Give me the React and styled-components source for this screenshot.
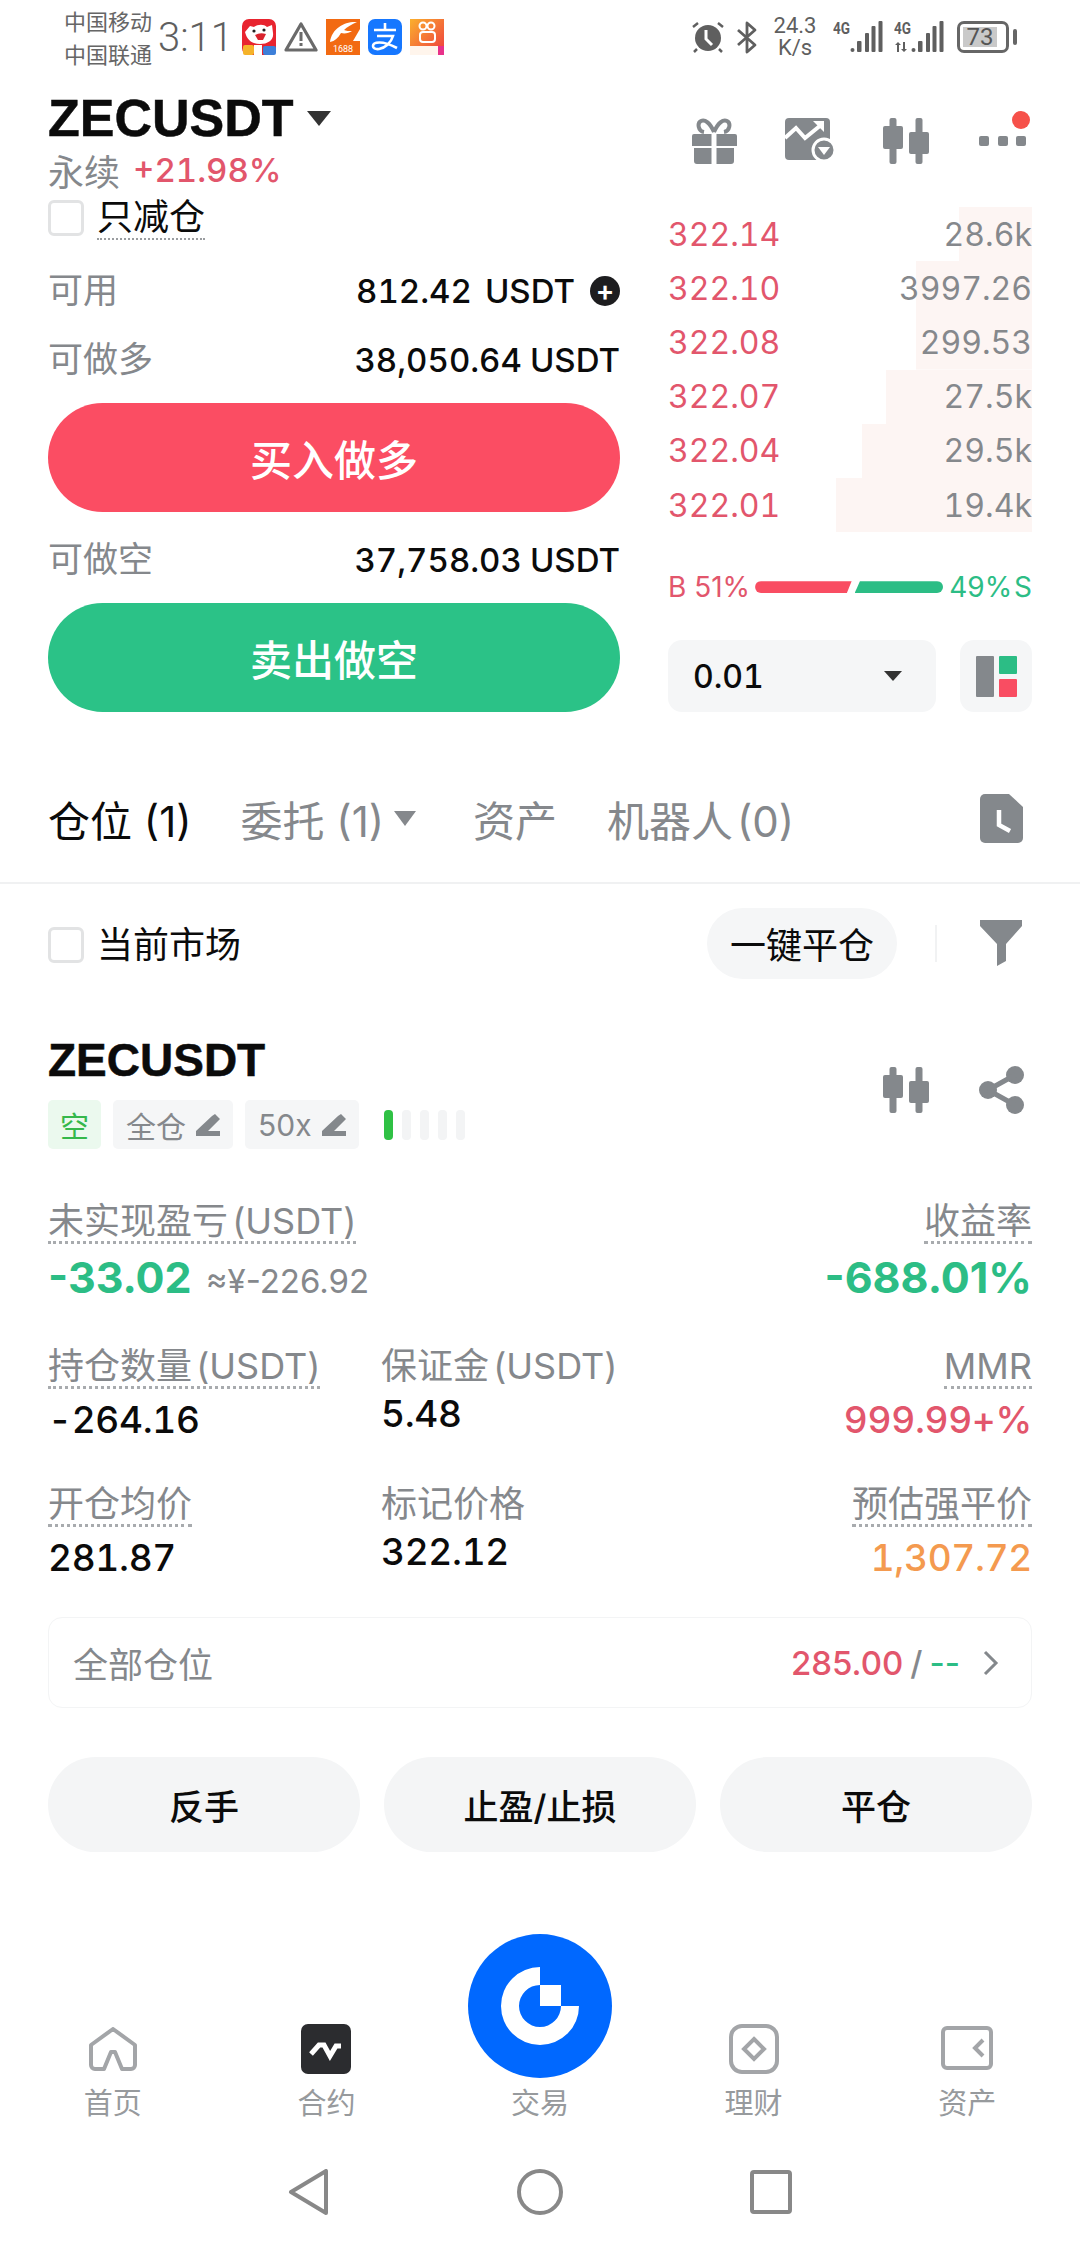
import styled, { createGlobalStyle } from 'styled-components';

const GlobalStyle = createGlobalStyle`
  html, body {
    margin: 0;
    padding: 0;
    background: #fff;
  }
  * {
    box-sizing: border-box;
  }
`;

const RED = '#e2566c';
const GREEN = '#2cbd85';
const GRAY = '#85888c';
const ICON = '#84888c';
const FONT = `Inter, "Noto Sans CJK SC", sans-serif`;

const Page = styled.div`
  width: 1080px;
  height: 2244px;
  display: flex;
  flex-direction: column;
  overflow: hidden;
  font-family: ${FONT};
  color: #0b0b0b;
`;

/* status bar */
const StatusBar = styled.div`
  height: 70px;
  padding: 4px 0 0 64px;
  display: flex;
  align-items: center;
  color: #666;
`;

const Carriers = styled.div`
  width: 94px;
  font-size: 22px;
  line-height: 33px;
  font-family: "Noto Sans CJK SC", sans-serif;
`;

const Clock = styled.div`
  width: 84px;
  font-size: 40px;
  font-family: Roboto, sans-serif;
  font-weight: 300;
  color: #5f5f5f;
`;

const AppIcons = styled.div`
  display: flex;
  gap: 8px;
  align-items: center;
`;

const StatusRight = styled.div`
  margin-left: auto;
  padding-right: 71px;
  display: flex;
  align-items: center;
  gap: 11px;
`;

const Speed = styled.div`
  width: 44px;
  margin: 0 5px 0 4px;
  text-align: center;
  font-size: 22px;
  line-height: 22px;
  font-family: Roboto, sans-serif;
  color: #5f5f5f;
`;

const SignalSvg = styled.svg`
  margin-top: -4px;
`;

const Battery = styled.div`
  position: relative;
  width: 52px;
  height: 32px;
  margin: 0 0 0 2px;
  border: 3px solid #666;
  border-radius: 7px;
  padding: 3px;
  &::after {
    content: '';
    position: absolute;
    right: -11px;
    top: 5px;
    width: 4px;
    height: 16px;
    border-radius: 2px;
    background: #666;
  }
`;

const BatteryFill = styled.div`
  width: 34px;
  height: 100%;
  background: #c9c9c9;
  font-size: 24px;
  line-height: 20px;
  text-align: center;
  color: #555;
  font-family: Roboto, sans-serif;
`;

/* top area */
const Top = styled.div`
  display: grid;
  grid-template-columns: 572px 364px;
  column-gap: 48px;
  padding-left: 48px;
`;

const Left = styled.div`
  padding-top: 18px;
`;

const TitleRow = styled.div`
  height: 60px;
  display: flex;
  align-items: center;
  gap: 13px;
`;

const Title = styled.div`
  font-size: ${(p) => p.$size}px;
  font-weight: 700;
  font-family: "Liberation Sans", sans-serif;
  line-height: 60px;
  -webkit-text-stroke: 0.5px #0b0b0b;
`;

const Caret = styled.span`
  width: 0;
  height: 0;
  flex: none;
  margin-left: ${(p) => p.$ml || 0}px;
  border-left: ${(p) => p.$w}px solid transparent;
  border-right: ${(p) => p.$w}px solid transparent;
  border-top: ${(p) => p.$h}px solid ${(p) => p.$color};
`;

const SubRow = styled.div`
  height: 44px;
  display: flex;
  align-items: center;
  gap: 13px;
  font-size: 36px;
  color: ${GRAY};
`;

const Change = styled.span`
  font-size: 33px;
  font-weight: 500;
  color: ${RED};
  font-variant-numeric: tabular-nums;
`;

const CheckRow = styled.div`
  display: flex;
  align-items: center;
  gap: ${(p) => p.$gap}px;
  height: 44px;
  margin-top: ${(p) => p.$mt || 0}px;
`;

const Box = styled.span`
  width: 36px;
  height: 36px;
  border: 3px solid #e2e3e4;
  border-radius: 6px;
  flex: none;
`;

const CheckText = styled.span`
  font-size: 36px;
  line-height: 42px;
  ${(p) => p.$dotted && 'border-bottom: 2px dotted #9a9da0;'}
`;

const InfoRow = styled.div`
  height: 50px;
  margin-top: ${(p) => p.$mt}px;
  display: flex;
  align-items: center;
  justify-content: space-between;
  font-size: 35px;
  color: ${GRAY};
`;

const InfoLabel = styled.span`
  margin-bottom: 3px;
`;

const InfoValue = styled.span`
  display: flex;
  align-items: center;
  gap: ${(p) => p.$gap}px;
  margin-top: 3px;
  font-size: 33px;
  font-weight: 500;
  color: #0b0b0b;
  font-variant-numeric: tabular-nums;
`;

const PlusBadge = styled.span`
  width: 30px;
  height: 30px;
  border-radius: 50%;
  background: #1d1d1f;
  color: #fff;
  margin-left: 2px;
  display: flex;
  align-items: center;
  justify-content: center;
  font-size: 28px;
  line-height: 28px;
  font-weight: 600;
`;

const TradeButton = styled.div`
  height: 109px;
  margin-top: 20px;
  border-radius: 55px;
  background: ${(p) => p.$color};
  color: #fff;
  font-size: 42px;
  font-weight: 500;
  display: flex;
  align-items: center;
  justify-content: center;
`;

/* order book */
const Right = styled.div`
  position: relative;
`;

const TopIcons = styled.div`
  height: 137px;
  padding: 48px 0 0 24px;
  display: flex;
  gap: 48px;
  align-items: flex-start;
  margin-right: -6px;
`;

const MoreIcon = styled.div`
  position: relative;
  width: 47px;
  height: 46px;
  margin-left: 2px;
  &::after {
    content: '';
    position: absolute;
    right: -4px;
    top: -7px;
    width: 18px;
    height: 18px;
    border-radius: 50%;
    background: #f6514a;
  }
`;

const BookRow = styled.div`
  height: 54.2px;
  display: flex;
  align-items: center;
  justify-content: space-between;
  font-size: 32px;
  font-variant-numeric: tabular-nums;
  background: linear-gradient(#fdf5f3, #fdf5f3) no-repeat right / ${(p) => p.$depth}px 100%;
`;

const Price = styled.span`
  color: ${RED};
`;

const Qty = styled.span`
  color: ${GRAY};
`;

const Ratio = styled.div`
  display: flex;
  align-items: center;
  margin-top: 38px;
  height: 34px;
  font-size: 28px;
`;

const RatioText = styled.span`
  color: ${(p) => p.$color};
  white-space: nowrap;
  margin-left: ${(p) => p.$ml || 0}px;
  word-spacing: ${(p) => p.$ws || 0}px;
`;

const RatioBar = styled.span`
  display: block;
  height: 12px;
  width: ${(p) => p.$w}px;
  margin-left: ${(p) => p.$ml}px;
  background: ${(p) => p.$color};
  border-radius: ${(p) => (p.$buy ? '6px 0 0 6px' : '0 6px 6px 0')};
  clip-path: ${(p) =>
    p.$buy ? 'polygon(0 0, 100% 0, 95% 100%, 0 100%)' : 'polygon(6% 0, 100% 0, 100% 100%, 0 100%)'};
`;

const BookControls = styled.div`
  display: flex;
  justify-content: space-between;
  margin-top: 36px;
`;

const DepthSelect = styled.div`
  width: 268px;
  height: 72px;
  padding: 0 34px 0 25px;
  border-radius: 14px;
  background: #f5f6f7;
  display: flex;
  align-items: center;
  justify-content: space-between;
  font-size: 32px;
  font-weight: 500;
  font-variant-numeric: tabular-nums;
`;

const LayoutButton = styled.div`
  width: 72px;
  height: 72px;
  border-radius: 14px;
  background: #f5f6f7;
  display: flex;
  align-items: center;
  justify-content: center;
`;

/* tabs */
const Tabs = styled.div`
  height: 125px;
  margin-top: 47px;
  padding: 0 57px 5px 48px;
  border-bottom: 2px solid #f0f1f2;
  display: flex;
  align-items: center;
`;

const Tab = styled.div`
  font-size: 42px;
  word-spacing: ${(p) => p.$ws || 0}px;
  color: ${(p) => (p.$active ? '#0b0b0b' : GRAY)};
  margin-right: ${(p) => p.$mr}px;
  display: flex;
  align-items: center;
  white-space: nowrap;
`;

const DocIcon = styled.div`
  margin-left: auto;
  display: flex;
`;

const FilterRow = styled.div`
  height: 94px;
  padding: 24px 58px 0 48px;
  display: flex;
  align-items: center;
`;

const FilterCheck = styled(CheckRow)`
  margin-top: 4px;
`;

const Pill = styled.div`
  margin-left: auto;
  width: 190px;
  height: 71px;
  border-radius: 36px;
  background: #f5f6f7;
  display: flex;
  align-items: center;
  justify-content: center;
  font-size: 36px;
`;

const VLine = styled.div`
  width: 2px;
  height: 37px;
  margin: 0 43px 0 38px;
  background: #f1f2f3;
`;

const PositionHead = styled.div`
  margin-top: 52px;
  padding: 0 55px 0 48px;
  display: flex;
  align-items: center;
  justify-content: space-between;
`;

const Tags = styled.div`
  display: flex;
  align-items: center;
  gap: 12px;
  margin-top: 10px;
`;

const Tag = styled.div`
  height: 49px;
  padding: 0 ${(p) => (p.$short ? 12 : 13)}px;
  border-radius: 5px;
  background: ${(p) => (p.$short ? '#ebf9ee' : '#f5f6f7')};
  color: ${(p) => (p.$short ? '#35b84b' : GRAY)};
  font-size: ${(p) => (p.$short ? 29 : 30)}px;
  display: flex;
  align-items: center;
  gap: 10px;
`;

const LevBars = styled.div`
  display: flex;
  gap: 9px;
  margin-left: 13px;
`;

const LevBar = styled.span`
  width: 9px;
  height: 30px;
  border-radius: 4px;
  background: ${(p) => (p.$on ? '#2fc144' : '#f3f4f5')};
`;

const HeadIcons = styled.div`
  display: flex;
  gap: 50px;
  align-items: center;
`;

/* stats */
const Stats = styled.div`
  margin-top: 49px;
  padding: 0 48px;
  display: grid;
  grid-template-columns: 333px 1fr auto;
  row-gap: 38px;
`;

const Stat = styled.div`
  display: flex;
  flex-direction: column;
  align-items: ${(p) => (p.$right ? 'flex-end' : 'flex-start')};
  ${(p) => p.$wide && 'grid-column: span 2;'}
`;

const StatLabel = styled.span`
  height: 46px;
  font-size: 36px;
  line-height: 47px;
  word-spacing: -6px;
  color: ${GRAY};
  white-space: nowrap;
  ${(p) => p.$dotted && 'border-bottom: 3px dotted #a8abae;'}
`;

const StatValue = styled.div`
  height: 46px;
  margin-top: ${(p) => (p.$plain ? 2 : 8)}px;
  line-height: 46px;
  font-size: 37px;
  font-weight: 500;
  letter-spacing: -0.3px;
  color: ${(p) => p.$color || '#0b0b0b'};
  white-space: nowrap;
  font-variant-numeric: tabular-nums;
`;

const BigValue = styled.div`
  height: 56px;
  line-height: 56px;
  margin-top: 5px;
  font-size: 43px;
  font-weight: 700;
  color: ${GREEN};
  display: flex;
  align-items: baseline;
  gap: 14px;
`;

const Approx = styled.span`
  font-size: 33px;
  font-weight: 400;
  color: ${GRAY};
`;

const AllPositions = styled.div`
  height: 91px;
  margin: 36px 48px 0;
  padding: 0 31px 0 24px;
  border: 1px solid #f3f4f5;
  border-radius: 14px;
  display: flex;
  align-items: center;
  justify-content: space-between;
  font-size: 35px;
  color: ${GRAY};
`;

const AllRight = styled.div`
  display: flex;
  align-items: center;
  font-size: 33px;
  font-weight: 500;
`;

const Colored = styled.span`
  color: ${(p) => p.$color};
  margin: 0 ${(p) => p.$mx || 0}px;
`;

const Chevron = styled.svg`
  margin-left: 22px;
`;

const Actions = styled.div`
  margin-top: 49px;
  padding: 0 48px;
  display: grid;
  grid-template-columns: repeat(3, 1fr);
  gap: 24px;
`;

const Action = styled.div`
  height: 95px;
  border-radius: 48px;
  background: #f4f5f6;
  display: flex;
  align-items: center;
  justify-content: center;
  font-size: 35px;
  font-weight: 500;
`;

/* bottom nav */
const Nav = styled.div`
  margin-top: auto;
  padding: 0 6px;
  display: grid;
  grid-template-columns: repeat(5, 1fr);
  align-items: end;
`;

const NavItem = styled.div`
  display: flex;
  flex-direction: column;
  align-items: center;
  font-size: 29px;
  line-height: 30px;
  color: #979a9d;
`;

const NavLabel = styled.span`
  margin-top: ${(p) => p.$mt}px;
`;

const SysNav = styled.div`
  height: 125px;
  padding-top: 50px;
  display: flex;
  justify-content: center;
  align-items: flex-start;
  gap: 187px;
`;

const AppIconStrip = () => (
  <AppIcons>
    <svg width="34" height="36" viewBox="0 0 34 36">
      <rect width="34" height="36" rx="7" fill="#e8242f" />
      <path d="M3 13 8 7l4 1c4-3 10-3 13 0l5-2 1 8c1 7-5 11-13 11S5 21 3 13z" fill="#fff" />
      <circle cx="12" cy="12" r="1.600" fill="#222" />
      <circle cx="22" cy="11" r="1.600" fill="#222" />
      <path d="M13 16q5-3 11-1l-3 6h-5z" fill="#d9232d" />
      <rect x="1" y="26" width="11" height="10" rx="2" fill="#f5b32a" />
      <rect x="12" y="26" width="8" height="10" fill="#fff" />
      <rect x="21" y="27" width="13" height="9" rx="2" fill="#3d7fd9" />
    </svg>
    <svg width="34" height="32" viewBox="0 0 34 32">
      <path d="M17 3 32 29H2z" fill="none" stroke="#6a6a6a" strokeWidth="3.200" strokeLinejoin="round" />
      <rect x="15.500" y="11" width="3" height="9" fill="#6a6a6a" />
      <rect x="15.500" y="22" width="3" height="3" fill="#6a6a6a" />
    </svg>
    <svg width="34" height="36" viewBox="0 0 34 36">
      <rect width="34" height="36" fill="#f26a12" />
      <path d="M31 3C19 2 6 9 4 23c5-1 8-4 11-9 4 1 8 0 11-2-3 0-6 0-8-1 3-3 8-6 13-8z" fill="#fff" />
      <path d="M34 10l-7 12h7z" fill="#fff" />
      <text x="17" y="33" textAnchor="middle" fontSize="9" fontFamily="Roboto, sans-serif" fill="#fff">1688</text>
    </svg>
    <svg width="34" height="36" viewBox="0 0 34 36">
      <rect width="34" height="36" rx="7" fill="#1677ff" />
      <path d="M6 11h22M17 4v7M9 17h16c-2 7-8 12-14 13-4 .5-6-1-6-3 0-4 9-6 24 2" fill="none" stroke="#fff" strokeWidth="2.600" />
    </svg>
    <svg width="34" height="36" viewBox="0 0 34 36">
      <defs>
        <linearGradient id="ks" x1="0" y1="0" x2="1" y2="1">
          <stop offset="0" stopColor="#fbb02e" />
          <stop offset="1" stopColor="#ee3a3f" />
        </linearGradient>
      </defs>
      <rect width="34" height="36" fill="url(#ks)" />
      <circle cx="13" cy="7" r="3.500" fill="none" stroke="#fff" strokeWidth="2" />
      <circle cx="21" cy="7" r="3.500" fill="none" stroke="#fff" strokeWidth="2" />
      <rect x="10" y="13" width="15" height="10" rx="3" fill="none" stroke="#fff" strokeWidth="2" />
      <path d="M0 27h34v9H0z" fill="#fff5ec" />
      <rect x="28" y="27" width="6" height="9" fill="#e8318a" />
    </svg>
  </AppIcons>
);

const Signal = ({ roaming }) => (
  <SignalSvg width="50" height="36" viewBox="0 -4 50 36">
    <text x="0" y="13" fontSize="17" fontWeight="700" fontFamily="Roboto, sans-serif" fill="#5f5f5f" textLength="17" lengthAdjust="spacingAndGlyphs">4G</text>
    {roaming && <path d="M3 31v-7H1l3-3 3 3H5v7zM9 21v7H7l3 3 3-3h-2v-7z" fill="#5f5f5f" />}
    <circle cx="19.500" cy="29" r="2" fill="#5f5f5f" />
    <rect x="24" y="20" width="4.500" height="11" rx="1" fill="#5f5f5f" />
    <rect x="32" y="12" width="4" height="19" rx="1" fill="#5f5f5f" />
    <rect x="38.500" y="5" width="4" height="26" rx="1" fill="#5f5f5f" />
    <rect x="45.500" y="0" width="4" height="31" rx="1" fill="#5f5f5f" />
  </SignalSvg>
);

const CandleIcon = () => (
  <svg width="46" height="46" viewBox="0 0 46 46" fill={ICON}>
    <rect x="6.500" y="0" width="7" height="46" rx="2" />
    <rect x="0" y="8" width="20" height="23" rx="2" />
    <rect x="32.500" y="0" width="7" height="46" rx="2" />
    <rect x="26" y="14" width="20" height="22" rx="2" />
  </svg>
);

const EditIcon = () => (
  <svg width="24" height="22" viewBox="0 0 24 22" fill={ICON}>
    <path d="M0 17 16 2l3-2 5 5-12 12h12v5H0z" />
  </svg>
);

const SpreadBars = () => (
  <LevBars>
    <LevBar $on />
    <LevBar />
    <LevBar />
    <LevBar />
    <LevBar />
  </LevBars>
);

const bookRows = [
  ['322.14', '28.6k', 73],
  ['322.10', '3997.26', 116],
  ['322.08', '299.53', 116],
  ['322.07', '27.5k', 146],
  ['322.04', '29.5k', 170],
  ['322.01', '19.4k', 196],
];

export default function App() {
  return (
    <Page>
      <GlobalStyle />
      <StatusBar>
        <Carriers>
          中国移动
          <br />
          中国联通
        </Carriers>
        <Clock>3:11</Clock>
        <AppIconStrip />
        <StatusRight>
          <svg width="34" height="32" viewBox="0 0 34 32">
            <circle cx="17" cy="17" r="13" fill="#5f5f5f" />
            <path d="M15 9v9l6 6" fill="none" stroke="#fff" strokeWidth="3" />
            <path d="M2 6l5-4M32 6l-5-4M6 28l-3 3M28 28l3 3" stroke="#5f5f5f" strokeWidth="2.500" />
          </svg>
          <svg width="22" height="33" viewBox="0 0 22 33">
            <path d="M2 9l17 15-8 7V2l8 7L2 24" fill="none" stroke="#5f5f5f" strokeWidth="2.800" strokeLinejoin="round" />
          </svg>
          <Speed>
            24.3
            <br />
            K/s
          </Speed>
          <Signal />
          <Signal roaming />
          <Battery>
            <BatteryFill>73</BatteryFill>
          </Battery>
        </StatusRight>
      </StatusBar>

      <Top>
        <Left>
          <TitleRow>
            <Title $size={52}>ZECUSDT</Title>
            <Caret $w={12} $h={15} $color="#333" />
          </TitleRow>
          <SubRow>
            永续
            <Change>+21.98%</Change>
          </SubRow>
          <CheckRow $gap={13} $mt={4}>
            <Box />
            <CheckText $dotted>只减仓</CheckText>
          </CheckRow>
          <InfoRow $mt={24}>
            <InfoLabel>可用</InfoLabel>
            <InfoValue $gap={13}>
              <span>812.42</span>
              <span>USDT</span>
              <PlusBadge>+</PlusBadge>
            </InfoValue>
          </InfoRow>
          <InfoRow $mt={19}>
            <InfoLabel>可做多</InfoLabel>
            <InfoValue $gap={8}>
              <span>38,050.64</span>
              <span>USDT</span>
            </InfoValue>
          </InfoRow>
          <TradeButton $color="#fb4d63">买入做多</TradeButton>
          <InfoRow $mt={21}>
            <InfoLabel>可做空</InfoLabel>
            <InfoValue $gap={8}>
              <span>37,758.03</span>
              <span>USDT</span>
            </InfoValue>
          </InfoRow>
          <TradeButton $color="#2bc287">卖出做空</TradeButton>
        </Left>
        <Right>
          <TopIcons>
            <svg width="45" height="46" viewBox="0 0 45 46" fill={ICON}>
              <path d="M0 18a2 2 0 0 1 2-2h17.500v12H0zM24.500 16H43a2 2 0 0 1 2 2v10H24.500zM2 30h17.500v16H5a3 3 0 0 1-3-3zM24.500 30H42v13a3 3 0 0 1-3 3H24.500z" />
              <path d="M22 14C18 5 13 1 9 3c-4 2-3 10 3 11M22 14c4-9 9-13 13-11 4 2 3 10-3 11" fill="none" stroke={ICON} strokeWidth="4" />
            </svg>
            <svg width="50" height="43" viewBox="0 0 50 43">
              <rect width="45" height="42" rx="4" fill={ICON} />
              <path d="M0 20l11-10 9 10L36 7" fill="none" stroke="#fff" strokeWidth="4" />
              <path d="M28 3h11v11z" fill="#fff" />
              <circle cx="39" cy="32" r="11" fill={ICON} stroke="#fff" strokeWidth="3" />
              <path d="M33 29h12l-6 8z" fill="#fff" />
            </svg>
            <CandleIcon />
            <MoreIcon>
              <svg width="47" height="46" viewBox="0 0 47 46" fill={ICON}>
                <rect x="0" y="18" width="10" height="10" rx="2" />
                <rect x="19" y="18" width="10" height="10" rx="2" />
                <rect x="37" y="18" width="10" height="10" rx="2" />
              </svg>
            </MoreIcon>
          </TopIcons>
          {bookRows.map(([price, qty, depth]) => (
            <BookRow key={price} $depth={depth}>
              <Price>{price}</Price>
              <Qty>{qty}</Qty>
            </BookRow>
          ))}
          <Ratio>
            <RatioText $color={RED}>B 51%</RatioText>
            <RatioBar $buy $w={98} $ml={5} $color="#f94d62" />
            <RatioBar $w={90} $ml={3} $color={GREEN} />
            <RatioText $color={GREEN} $ml={6} $ws={-6}>49% S</RatioText>
          </Ratio>
          <BookControls>
            <DepthSelect>
              0.01
              <Caret $w={9} $h={10} $color="#333" />
            </DepthSelect>
            <LayoutButton>
              <svg width="41" height="41" viewBox="0 0 41 41">
                <rect width="18" height="41" rx="1" fill={ICON} />
                <rect x="23" width="18" height="18" rx="1" fill={GREEN} />
                <rect x="23" y="23" width="18" height="18" rx="1" fill="#f94d62" />
              </svg>
            </LayoutButton>
          </BookControls>
        </Right>
      </Top>

      <Tabs>
        <Tab $active $mr={49}>仓位 (1)</Tab>
        <Tab $mr={57}>
          委托 (1)
          <Caret $w={11} $h={15} $color={GRAY} $ml={10} />
        </Tab>
        <Tab $mr={50}>资产</Tab>
        <Tab $ws={-8}>机器人 (0)</Tab>
        <DocIcon>
          <svg width="43" height="49" viewBox="0 0 43 49">
            <path d="M5 0h24l14 13v31a5 5 0 0 1-5 5H5a5 5 0 0 1-5-5V5a5 5 0 0 1 5-5z" fill={ICON} />
            <path d="M19 16v15l11 6" fill="none" stroke="#fff" strokeWidth="4.500" />
          </svg>
        </DocIcon>
      </Tabs>

      <FilterRow>
        <FilterCheck $gap={13}>
          <Box />
          <CheckText>当前市场</CheckText>
        </FilterCheck>
        <Pill>一键平仓</Pill>
        <VLine />
        <svg width="42" height="46" viewBox="0 0 42 46">
          <path d="M0 0h42v6L26 24v17l-9 5V24L0 6z" fill={ICON} />
        </svg>
      </FilterRow>

      <PositionHead>
        <div>
          <Title $size={46}>ZECUSDT</Title>
          <Tags>
            <Tag $short>空</Tag>
            <Tag>
              全仓
              <EditIcon />
            </Tag>
            <Tag>
              50x
              <EditIcon />
            </Tag>
            <SpreadBars />
          </Tags>
        </div>
        <HeadIcons>
          <CandleIcon />
          <svg width="46" height="48" viewBox="0 0 46 48" fill={ICON}>
            <circle cx="36" cy="9" r="9" />
            <circle cx="9" cy="24" r="9" />
            <circle cx="36" cy="39" r="9" />
            <path d="M9 24 36 9M9 24l27 15" stroke={ICON} strokeWidth="5" />
          </svg>
        </HeadIcons>
      </PositionHead>

      <Stats>
        <Stat $wide>
          <StatLabel $dotted>未实现盈亏 (USDT)</StatLabel>
          <BigValue>
            -33.02
            <Approx>≈¥-226.92</Approx>
          </BigValue>
        </Stat>
        <Stat $right>
          <StatLabel $dotted>收益率</StatLabel>
          <BigValue>-688.01%</BigValue>
        </Stat>
        <Stat>
          <StatLabel $dotted>持仓数量 (USDT)</StatLabel>
          <StatValue>-264.16</StatValue>
        </Stat>
        <Stat>
          <StatLabel>保证金 (USDT)</StatLabel>
          <StatValue $plain>5.48</StatValue>
        </Stat>
        <Stat $right>
          <StatLabel $dotted>MMR</StatLabel>
          <StatValue $color={RED}>999.99+%</StatValue>
        </Stat>
        <Stat>
          <StatLabel $dotted>开仓均价</StatLabel>
          <StatValue>281.87</StatValue>
        </Stat>
        <Stat>
          <StatLabel>标记价格</StatLabel>
          <StatValue $plain>322.12</StatValue>
        </Stat>
        <Stat $right>
          <StatLabel $dotted>预估强平价</StatLabel>
          <StatValue $color="#f49a4f">1,307.72</StatValue>
        </Stat>
      </Stats>

      <AllPositions>
        全部仓位
        <AllRight>
          <Colored $color={RED}>285.00</Colored>
          <Colored $color={GRAY} $mx={7}>/</Colored>
          <Colored $color={GREEN}>--</Colored>
          <Chevron width="18" height="26" viewBox="0 0 18 26">
            <path d="M3 2l11 11L3 24" fill="none" stroke={ICON} strokeWidth="3" />
          </Chevron>
        </AllRight>
      </AllPositions>

      <Actions>
        <Action>反手</Action>
        <Action>止盈/止损</Action>
        <Action>平仓</Action>
      </Actions>

      <Nav>
        <NavItem>
          <svg width="48" height="44" viewBox="0 0 48 44">
            <path d="M24 2 46 18v20a4 4 0 0 1-4 4H33L26 25h-4L15 42H6a4 4 0 0 1-4-4V18z" fill="none" stroke="#a3a5a8" strokeWidth="4" strokeLinejoin="round" />
          </svg>
          <NavLabel $mt={18}>首页</NavLabel>
        </NavItem>
        <NavItem>
          <svg width="50" height="50" viewBox="0 0 50 50">
            <rect width="50" height="50" rx="7" fill="#2b2c2f" />
            <path d="M10 30l8-9h5l6 11 6-10h5" fill="none" stroke="#fff" strokeWidth="5" />
          </svg>
          <NavLabel $mt={15}>合约</NavLabel>
        </NavItem>
        <NavItem>
          <svg width="144" height="144" viewBox="0 0 144 144">
            <circle cx="72" cy="72" r="72" fill="#0068ff" />
            <path d="M72 33A39 39 0 1 0 111 72H93A21 21 0 1 1 72 51Z" fill="#fff" />
            <rect x="72" y="51" width="21" height="21" fill="#fff" />
          </svg>
          <NavLabel $mt={11}>交易</NavLabel>
        </NavItem>
        <NavItem>
          <svg width="50" height="50" viewBox="0 0 50 50">
            <rect x="2" y="2" width="46" height="46" rx="11" fill="none" stroke="#a3a5a8" strokeWidth="4" />
            <path d="M25 15l10 10-10 10-10-10z" fill="none" stroke="#a3a5a8" strokeWidth="4" />
          </svg>
          <NavLabel $mt={15}>理财</NavLabel>
        </NavItem>
        <NavItem>
          <svg width="52" height="44" viewBox="0 0 52 44">
            <rect x="2" y="2" width="48" height="40" rx="4" fill="none" stroke="#a3a5a8" strokeWidth="4" />
            <path d="M42 14l-8 8 8 8" fill="none" stroke="#a3a5a8" strokeWidth="4" />
          </svg>
          <NavLabel $mt={19}>资产</NavLabel>
        </NavItem>
      </Nav>

      <SysNav>
        <svg width="42" height="46" viewBox="0 0 42 46">
          <path d="M38 2v42L3 23z" fill="none" stroke="#888" strokeWidth="4" strokeLinejoin="round" />
        </svg>
        <svg width="46" height="46" viewBox="0 0 46 46">
          <circle cx="23" cy="23" r="21" fill="none" stroke="#888" strokeWidth="4" />
        </svg>
        <svg width="42" height="46" viewBox="0 0 42 46">
          <rect x="2" y="3" width="38" height="40" rx="2" fill="none" stroke="#888" strokeWidth="4" />
        </svg>
      </SysNav>
    </Page>
  );
}
